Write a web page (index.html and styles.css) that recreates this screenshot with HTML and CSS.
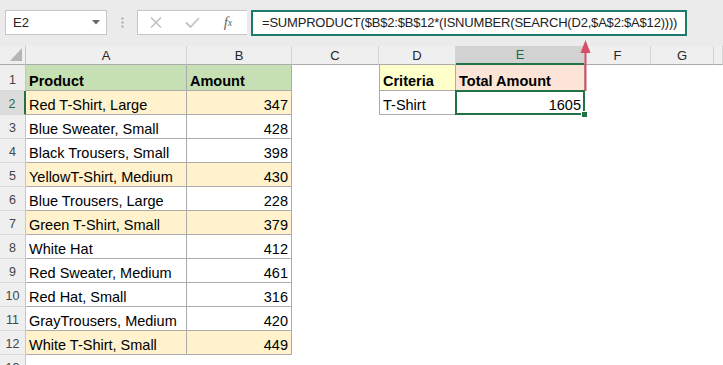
FILE: index.html
```html
<!DOCTYPE html>
<html lang="en">
<head>
    <meta charset="UTF-8">
    <title>SUMPRODUCT partial match</title>
    <link rel="stylesheet" href="styles.css">
</head>
<body>
<div class="page">
    <!-- formula bar -->
    <div class="bar">
        <div class="namebox">
            <span>E2</span>
            <svg width="8" height="5" viewBox="0 0 8 5"><polygon points="0,0 8,0 4,4.5" fill="#666"/></svg>
        </div>
        <div class="grip">
            <svg width="3" height="12" viewBox="0 0 3 12">
                <rect x="0.5" y="0.5" width="2" height="2" fill="#a8a8a8"/>
                <rect x="0.5" y="4.5" width="2" height="2" fill="#a8a8a8"/>
                <rect x="0.5" y="8.5" width="2" height="2" fill="#a8a8a8"/>
            </svg>
        </div>
        <div class="fbtns">
            <span class="fbtn">
                <svg width="12" height="11" viewBox="0 0 12 11"><path d="M1 0.5 L11 10.5 M11 0.5 L1 10.5" stroke="#c2c2c2" stroke-width="1.6" fill="none"/></svg>
            </span>
            <span class="fbtn">
                <svg width="15" height="11" viewBox="0 0 15 11"><path d="M1 5.5 L5.5 10 L14 1" stroke="#c2c2c2" stroke-width="1.8" fill="none"/></svg>
            </span>
            <span class="fbtn fx">f<sub>x</sub></span>
        </div>
        <div class="formula">=SUMPRODUCT($B$2:$B$12*(ISNUMBER(SEARCH(D2,$A$2:$A$12))))</div>
    </div>

    <!-- worksheet -->
    <div class="sheet">
        <div class="corner"></div>
        <div class="ch">A</div>
        <div class="ch">B</div>
        <div class="ch">C</div>
        <div class="ch">D</div>
        <div class="ch on">E</div>
        <div class="ch">F</div>
        <div class="ch">G</div>
        <div class="ch"></div>

        <div class="rh">1</div>
        <div class="c t g b">Product</div>
        <div class="c t g b">Amount</div>
        <div class="c t y b dcol">Criteria</div>
        <div class="c t p b">Total Amount</div>

        <div class="rh on">2</div>
        <div class="c t o">Red T-Shirt, Large</div>
        <div class="c t o n">347</div>
        <div class="c t dcol">T-Shirt</div>
        <div class="c t n sel">1605</div>

        <div class="rh">3</div>
        <div class="c t">Blue Sweater, Small</div>
        <div class="c t n">428</div>

        <div class="rh">4</div>
        <div class="c t">Black Trousers, Small</div>
        <div class="c t n">398</div>

        <div class="rh">5</div>
        <div class="c t o">YellowT-Shirt, Medium</div>
        <div class="c t o n">430</div>

        <div class="rh">6</div>
        <div class="c t">Blue Trousers, Large</div>
        <div class="c t n">228</div>

        <div class="rh">7</div>
        <div class="c t o">Green T-Shirt, Small</div>
        <div class="c t o n">379</div>

        <div class="rh">8</div>
        <div class="c t">White Hat</div>
        <div class="c t n">412</div>

        <div class="rh">9</div>
        <div class="c t">Red Sweater, Medium</div>
        <div class="c t n">461</div>

        <div class="rh">10</div>
        <div class="c t">Red Hat, Small</div>
        <div class="c t n">316</div>

        <div class="rh">11</div>
        <div class="c t">GrayTrousers, Medium</div>
        <div class="c t n">420</div>

        <div class="rh">12</div>
        <div class="c t o">White T-Shirt, Small</div>
        <div class="c t o n">449</div>

        <div class="rh">13</div>
    </div>

    <!-- arrow pointing from result to formula -->
    <svg class="arrow" width="14" height="54" viewBox="0 0 14 54">
        <polygon points="6.5,1 1.5,14 11.5,14" fill="#d64f66"/>
        <line x1="6.5" y1="13" x2="6.5" y2="52" stroke="#d64f66" stroke-width="2"/>
    </svg>
</div>
</body>
</html>
```

FILE: styles.css
```css
body {
    margin: 0;
    font-family: "Liberation Sans", Arial, sans-serif;
    background: #fff;
    overflow: hidden;
}
.page {
    position: relative;
    width: 723px;
    height: 365px;
    overflow: hidden;
}

/* formula bar */
.bar {
    display: flex;
    align-items: flex-start;
    height: 46px;
    padding: 10px 0 0 5px;
    box-sizing: border-box;
    background: #ebebeb;
}
.namebox {
    width: 102px;
    height: 25px;
    box-sizing: border-box;
    background: #fff;
    border: 1px solid #c6c6c6;
    display: flex;
    align-items: center;
    justify-content: space-between;
    padding: 0 6px 0 7px;
    font-size: 13px;
    color: #222;
}
.grip {
    width: 30px;
    height: 25px;
    display: flex;
    align-items: center;
    justify-content: center;
}
.fbtns {
    width: 110px;
    height: 25px;
    box-sizing: border-box;
    background: #fff;
    border: 1px solid #c6c6c6;
    border-right: none;
    display: flex;
    align-items: center;
}
.fbtn {
    width: 36px;
    display: flex;
    justify-content: center;
    align-items: center;
}
.fx {
    font-family: "Liberation Serif", "Times New Roman", serif;
    font-style: italic;
    font-size: 15px;
    color: #666;
    line-height: 1;
}
.fx sub {
    font-size: 10px;
    vertical-align: -1px;
}
.formula {
    margin-left: 4px;
    width: 436px;
    height: 26px;
    box-sizing: border-box;
    border: 2px solid #1e7b6c;
    background: #fff;
    padding-left: 9px;
    font-size: 13px;
    letter-spacing: -0.2px;
    line-height: 22px;
    color: #222;
    white-space: nowrap;
}

/* worksheet */
.sheet {
    display: grid;
    grid-template-columns: 26px 161px 105px 87px 77px 129px 66px 63px 9px;
    grid-template-rows: 19px 26px;
    grid-auto-rows: 24px;
    font-size: 14.5px;
}
.corner {
    position: relative;
    background: #efefef;
    border-right: 1px solid #c6c6c6;
    border-bottom: 1px solid #ababab;
    box-sizing: border-box;
}
.corner::after {
    content: "";
    position: absolute;
    right: 3px;
    bottom: 3px;
    width: 12px;
    height: 13px;
    background: #b5b5b5;
    clip-path: polygon(100% 0, 100% 100%, 0 100%);
}
.ch {
    display: flex;
    align-items: center;
    justify-content: center;
    background: #efefef;
    border-right: 1px solid #d4d4d4;
    border-bottom: 1px solid #ababab;
    box-sizing: border-box;
    font-size: 13px;
    color: #262626;
}
.ch.on {
    background: #d2d2d2;
    border-bottom: 2px solid #217346;
    color: #1d6b45;
}
.rh {
    grid-column: 1;
    display: flex;
    align-items: flex-end;
    justify-content: center;
    padding-bottom: 1px;
    line-height: 17px;
    background: #efefef;
    border-right: 1px solid #c6c6c6;
    border-bottom: 1px solid #d9d9d9;
    box-sizing: border-box;
    font-size: 12.5px;
    color: #444;
}
.rh.on {
    background: #dcdcdc;
    border-right: 2px solid #217346;
    color: #1d6b45;
}
.c {
    display: flex;
    align-items: flex-end;
    padding: 0 3px;
    line-height: 17px;
    box-sizing: border-box;
    white-space: nowrap;
    color: #000;
}
.t {
    border-right: 1px solid #ababab;
    border-bottom: 1px solid #ababab;
}
.n { justify-content: flex-end; }
.b { font-weight: bold; }
.g { background: #c6e0b4; }
.o { background: #fff2cc; }
.y { background: #ffffcc; }
.p { background: #fce4d6; }
.dcol {
    grid-column: 5;
    border-left: 1px solid #ababab;
}

/* selected cell E2 */
.sel {
    position: relative;
}
.sel::after {
    content: "";
    position: absolute;
    top: -1px;
    left: -1px;
    right: -1px;
    bottom: -1px;
    border: 2px solid #217346;
}
.sel::before {
    content: "";
    position: absolute;
    right: -4px;
    bottom: -4px;
    width: 5px;
    height: 5px;
    background: #217346;
    border: 1px solid #fff;
    z-index: 1;
}

.arrow {
    position: absolute;
    left: 579px;
    top: 39px;
}
```
